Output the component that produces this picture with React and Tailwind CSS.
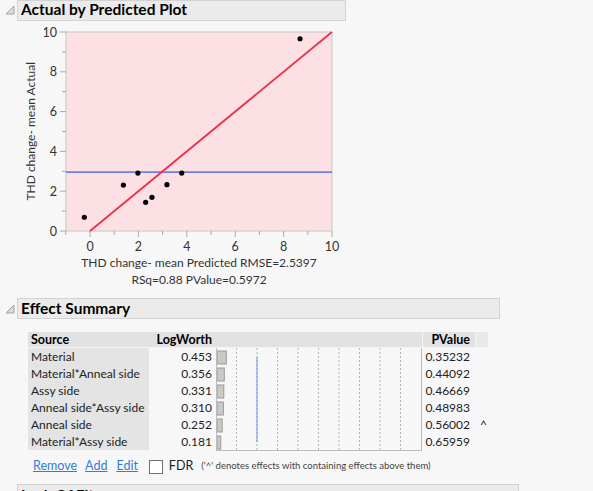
import React from 'react';

// Actual by Predicted + Effect Summary report

const FONT = { fontFamily: "Lato, 'Open Sans', sans-serif" };

const POINTS = [
  [-0.235, 0.69], [1.38, 2.31], [1.98, 2.91], [2.3, 1.44],
  [2.56, 1.69], [3.18, 2.33], [3.79, 2.91], [8.68, 9.66],
];

const EFFECTS = [
  { source: 'Material', logworth: 0.453, pvalue: '0.35232', flag: '' },
  { source: 'Material*Anneal side', logworth: 0.356, pvalue: '0.44092', flag: '' },
  { source: 'Assy side', logworth: 0.331, pvalue: '0.46669', flag: '' },
  { source: 'Anneal side*Assy side', logworth: 0.31, pvalue: '0.48983', flag: '' },
  { source: 'Anneal side', logworth: 0.252, pvalue: '0.56002', flag: '^' },
  { source: 'Material*Assy side', logworth: 0.181, pvalue: '0.65959', flag: '' },
];

const Disclosure = () => (
  <svg width="10" height="10" viewBox="0 0 10 10" className="shrink-0">
    <polygon points="1,9 9,9 9,1" fill="#dcdcdc" stroke="#a4a4a4" strokeWidth="1" />
  </svg>
);

const OutlineHeader = ({ title, width, className = '' }) => (
  <div className={`flex items-center ${className}`}>
    <div className="w-[17px] flex justify-center pl-[2px]"><Disclosure /></div>
    <div
      className="h-[21px] flex items-center pl-[3px] bg-[#ebebeb] border border-[#d3d3d3] text-[15.5px] font-bold text-black"
      style={{ width }}
    >
      {title}
    </div>
  </div>
);

const px = (v) => 46 + 24.2 * v;
const py = (v) => 207 - 19.9 * v;

const ActualByPredicted = () => {
  const ints = Array.from({ length: 11 }, (_, i) => i);
  return (
    <svg width="300" height="230" className="shrink-0">
      <rect x="22" y="8" width="266" height="199" fill="#fce0e3" stroke="#c8c8c8" />
      {/* y ticks */}
      {ints.map((v) => (
        <line key={`y${v}`} x1={v % 2 ? 18 : 16} x2="22" y1={py(v)} y2={py(v)} stroke="#a8a8a8" />
      ))}
      {[0, 2, 4, 6, 8, 10].map((v) => (
        <text key={`yl${v}`} x="13" y={py(v) + 4.5} textAnchor="end" fontSize="12.5" fill="#333">{v}</text>
      ))}
      {/* x ticks */}
      {[-1, ...ints].map((v) => (
        <line key={`x${v}`} x1={px(v)} x2={px(v)} y1="207" y2={v % 2 ? 211 : 213} stroke="#a8a8a8" />
      ))}
      {[0, 2, 4, 6, 8, 10].map((v) => (
        <text key={`xl${v}`} x={px(v)} y="227" textAnchor="middle" fontSize="12.5" fill="#333">{v}</text>
      ))}
      <line x1="22" x2="288" y1={py(2.96)} y2={py(2.96)} stroke="#6c7fe4" strokeWidth="1.8" />
      <line x1={px(0)} y1={py(0)} x2={px(10)} y2={py(10)} stroke="#ef2f4a" strokeWidth="1.8" />
      {POINTS.map(([x, y], i) => (
        <circle key={i} cx={px(x)} cy={py(y)} r="2.6" fill="#000" />
      ))}
    </svg>
  );
};

const LogWorthBars = () => (
  <svg width="206" height="103" className="block">
    {Array.from({ length: 9 }, (_, i) => 20.5 * (i + 1)).map((x) => (
      <line key={x} x1={x} x2={x} y1="0" y2="102" stroke="#b4b4b4" strokeDasharray="2 2" />
    ))}
    <line x1="41" x2="41" y1="9" y2="94" stroke="#6c8ef0" strokeWidth="1" />
    {EFFECTS.map((e, i) => (
      <rect
        key={e.source}
        x="1"
        y={i * 17 + 3}
        width={Math.max(e.logworth * 20.5, 2)}
        height="13"
        fill="#c9c9c5"
        stroke="#9a9a9a"
      />
    ))}
    <line x1="0.5" x2="0.5" y1="0" y2="103" stroke="#bdbdbd" />
    <line x1="205.5" x2="205.5" y1="0" y2="103" stroke="#bdbdbd" />
    <line x1="0" x2="206" y1="102.5" y2="102.5" stroke="#bdbdbd" />
  </svg>
);

const EffectTable = () => (
  <div className="flex ml-[28px] text-[12px] text-[#222] leading-[17px]">
    {/* Source */}
    <div className="w-[121px] flex flex-col">
      <div className="h-[16px] leading-[16px] bg-[#e2e2e2] border-b border-[#f4f4f4] font-bold pl-[3px] text-black text-[12.5px]">Source</div>
      <div className="bg-[#e4e4e4]">
        {EFFECTS.map((e) => (
          <div key={e.source} className="h-[17px] pl-[3px] whitespace-nowrap">{e.source}</div>
        ))}
      </div>
    </div>
    {/* LogWorth */}
    <div className="w-[67px] flex flex-col">
      <div className="h-[16px] leading-[16px] bg-[#e2e2e2] border-b border-[#f4f4f4] font-bold text-right pr-[4px] text-black text-[12.5px]">LogWorth</div>
      {EFFECTS.map((e) => (
        <div key={e.source} className="h-[17px] text-right pr-[4px]">{e.logworth.toFixed(3)}</div>
      ))}
    </div>
    {/* Bars */}
    <div className="w-[206px] flex flex-col">
      <div className="h-[16px] bg-[#e2e2e2] border-b border-[#f4f4f4]" />
      <LogWorthBars />
    </div>
    {/* PValue */}
    <div className="w-[53px] flex flex-col">
      <div className="h-[16px] leading-[16px] bg-[#e2e2e2] border-b border-l border-[#f4f4f4] font-bold text-right pr-[5px] text-black text-[12.5px]">PValue</div>
      {EFFECTS.map((e) => (
        <div key={e.source} className="h-[17px] text-right pr-[5px]">{e.pvalue}</div>
      ))}
    </div>
    <div className="w-[13px] flex flex-col">
      <div className="h-[16px] bg-[#e9e9e9] border-b border-l border-[#f4f4f4]" />
      {EFFECTS.map((e) => (
        <div key={e.source} className="h-[17px] pl-[5px]">{e.flag}</div>
      ))}
    </div>
  </div>
);

export default function App() {
  return (
    <div className="w-[593px] h-[491px] bg-[#f7f7f7] overflow-hidden" style={FONT}>
      {/* Actual by Predicted Plot */}
      <div className="-mt-px">
        <OutlineHeader title="Actual by Predicted Plot" width="329px" className="h-[22px]" />
      </div>

      <div className="flex mt-[3px]">
        <div className="w-[44px] h-[199px] mt-[8px] flex items-center justify-end pr-[4px]">
          <span className="[writing-mode:vertical-rl] rotate-180 text-[12px] text-[#333] whitespace-nowrap">
            THD change- mean Actual
          </span>
        </div>
        <ActualByPredicted />
      </div>

      <div className="ml-[66px] w-[266px] text-center text-[12px] leading-[17px] text-[#333]">
        <div className="whitespace-nowrap">THD change- mean Predicted RMSE=2.5397</div>
        <div>RSq=0.88 PValue=0.5972</div>
      </div>

      {/* Effect Summary */}
      <OutlineHeader title="Effect Summary" width="483px" className="mt-[10px]" />

      <div className="mt-[13px]">
        <EffectTable />
      </div>

      <div className="flex items-center ml-[33px] mt-[7px] h-[17px] text-[12.5px]">
        <a className="text-[#2f7ddb] underline">Remove</a>
        <a className="text-[#2f7ddb] underline ml-[8px]">Add</a>
        <a className="text-[#2f7ddb] underline ml-[9px]">Edit</a>
        <span className="w-[14px] h-[14px] ml-[11px] border border-[#707070] bg-white" />
        <span className="ml-[6px] text-[#222]">FDR</span>
        <span className="ml-[8px] text-[9.5px] text-[#444] whitespace-nowrap">
          ('^' denotes effects with containing effects above them)
        </span>
      </div>

      <div className="mt-[9px] flex items-center">
        <div className="w-[17px]" />
        <div className="w-[502px] h-[21px] pl-[3px] bg-[#ebebeb] border border-[#d3d3d3] text-[15px] font-bold leading-[21px]">
          Lack Of Fit
        </div>
      </div>
    </div>
  );
}
